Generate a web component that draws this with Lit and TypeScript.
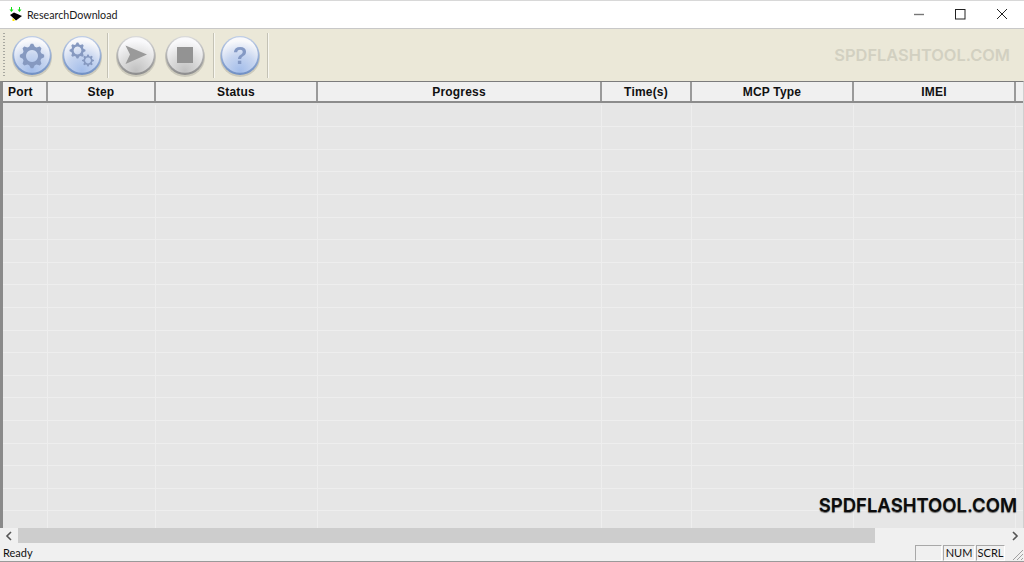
import { LitElement, html, css, svg } from "lit";
import { customElement } from "lit/decorators.js";

const cols = [
  ["Port", 45], ["Step", 108], ["Status", 162], ["Progress", 284],
  ["Time(s)", 90], ["MCP Type", 162], ["IMEI", 162],
] as const;

function gearPath(cx: number, cy: number, r: number, R: number, teeth: number) {
  let d = "";
  const n = teeth * 4;
  for (let i = 0; i < n; i++) {
    const a = (i / n) * Math.PI * 2 - Math.PI / n;
    const rad = i % 4 < 2 ? R : r;
    d += `${i ? "L" : "M"}${(cx + rad * Math.cos(a)).toFixed(2)} ${(cy + rad * Math.sin(a)).toFixed(2)}`;
  }
  return d + "Z";
}

function orb(id: string, blue: boolean, inner: unknown) {
  const edge = blue ? "#6f8fc4" : "#8c8c8c";
  const mid = blue ? "#c8d6f0" : "#dedede";
  const low = blue ? "#a3bdea" : "#c0c0c0";
  return html`<svg class="orb" width="42" height="44" viewBox="0 0 42 44">
    <defs>
      <linearGradient id="${id}b" x1="0" y1="0" x2="0" y2="1">
        <stop offset="0" stop-color="${blue ? "#c0cee6" : "#dadada"}" />
        <stop offset="1" stop-color="${edge}" />
      </linearGradient>
      <radialGradient id="${id}f" cx=".5" cy=".95" r=".85">
        <stop offset="0" stop-color="${low}" />
        <stop offset=".55" stop-color="${mid}" />
        <stop offset="1" stop-color="#f9f9fb" />
      </radialGradient>
    </defs>
    <ellipse cx="21" cy="23.5" rx="20" ry="19.5" fill="#000" opacity=".13" />
    <circle cx="21" cy="21.5" r="19.5" fill="url(#${id}b)" />
    <circle cx="21" cy="21" r="17.8" fill="url(#${id}f)" />
    ${inner}
  </svg>`;
}

const gearA = svg`<path fill-rule="evenodd" fill="#8699c0" d="${gearPath(21, 22, 9.6, 12.2, 8)} M21 16a6 6 0 1 0 .01 0Z" />`;
const gearB = svg`
  <path fill-rule="evenodd" fill="#8699c0" d="${gearPath(16.5, 16.5, 6.2, 8, 8)} M16.5 12.6a3.9 3.9 0 1 0 .01 0Z" />
  <path fill-rule="evenodd" fill="#8699c0" d="${gearPath(27, 26.5, 4.4, 6, 8)} M27 23.6a2.9 2.9 0 1 0 .01 0Z" />`;
const play = svg`<path fill="#9a9a9a" d="M10.5 11.5 32 20.5 10.5 30 15 20.5Z" />`;
const stop = svg`<rect x="13" y="13" width="16" height="16" fill="#939393" />`;
const help = svg`<text x="21" y="30" text-anchor="middle" font-family="Liberation Sans, sans-serif" font-weight="700" font-size="24" fill="#8499c4">?</text>`;

const logo = html`<svg width="14" height="14" viewBox="0 0 14 14">
  <path fill="#16e016" d="M2 0h1v2.5h1.5L2.5 5 .5 2.5H2ZM10 0h1v2.5h1.5L10.5 5l-2-2.5H10Z" />
  <path fill="#000" d="M1 8 5 5.5 13 9 7 13.5Z" />
  <path fill="#ffe600" d="M3.5 11 6 13l-1 1H3.5Z" />
</svg>`;

@customElement("app-root")
export class AppRoot extends LitElement {
  static styles = css`
    :host {
      display: flex;
      flex-direction: column;
      width: 1024px;
      height: 562px;
      overflow: hidden;
      position: relative;
      background: #f0f0f0;
      font-family: "Liberation Sans", Arial, sans-serif;
      color: #000;
    }
    .title {
      height: 29px;
      flex: none;
      display: flex;
      align-items: center;
      background: #fff;
      box-sizing: border-box;
      border-top: 1px solid #d8d8d8;
      border-bottom: 1px solid #c8c8c8;
      padding: 0 0 1px 9px;
    }
    .name {
      margin-left: 4px;
      font: 10.7px Lato, sans-serif;
      color: #1a1a1a;
    }
    .winbtns { margin-left: auto; display: flex; margin-right: 2px; }
    .winbtn {
      width: 41px;
      height: 27px;
      display: flex;
      align-items: center;
      justify-content: center;
    }
    .toolbar {
      height: 52px;
      flex: none;
      box-sizing: border-box;
      background: #ebe8d8;
      display: flex;
      align-items: center;
      padding-left: 3px;
    }
    .grip {
      width: 2px;
      height: 44px;
      margin-right: 6px;
      background: repeating-linear-gradient(to bottom, #a8a8a0 0 1px, transparent 1px 3px);
    }
    .orb { flex: none; display: block; margin: 1px 4px 0 0; filter: blur(0.45px); }
    .sep {
      width: 1px;
      height: 45px;
      flex: none;
      background: #c4c2b5;
      border-right: 1px solid #f8f7f0;
    }
    .gap2 { width: 2px; flex: none; }
    .gap3 { width: 3px; flex: none; }
    .gap4 { width: 4px; flex: none; }
    .gap6 { width: 6px; flex: none; }
    .wm1 {
      margin-left: auto;
      margin-right: 14px;
      font: 600 16.4px Inter, sans-serif;
      color: #d2d0c1;
    }
    .grid {
      flex: 1;
      min-height: 0;
      display: flex;
      flex-direction: column;
      box-sizing: border-box;
      border-top: 1px solid #7c7c7c;
      border-left: 3px solid #8a8a8a;
      border-right: 1px solid #d0d0d0;
      background: #e6e6e6;
    }
    .head {
      flex: none;
      display: flex;
      height: 21px;
      box-sizing: border-box;
      border-bottom: 2px solid #8c8c8c;
      background: #f0f0f0;
    }
    .th {
      flex: none;
      box-sizing: border-box;
      border-right: 2px solid #9a9a9a;
      text-align: center;
      font: 700 12px/20px "Liberation Sans", Arial, sans-serif;
      letter-spacing: 0.2px;
      color: #111;
    }
    .th.left { text-align: left; padding-left: 5px; }
    .rest { flex: 1; }
    .body { flex: 1; min-height: 0; overflow: hidden; padding-top: 1.6px; }
    .row { display: flex; height: 22.6px; box-sizing: border-box; border-bottom: 1px solid #eeeeee; }
    .td { flex: none; box-sizing: border-box; border-right: 1px solid #eeeeee; }
    .scroll {
      flex: none;
      height: 17px;
      display: flex;
      align-items: stretch;
      background: #f0f0f0;
      padding-bottom: 2px;
      box-sizing: border-box;
    }
    .arrow { flex: none; width: 18px; display: flex; align-items: center; justify-content: center; }
    .track { flex: 1; display: flex; }
    .thumb { width: 857px; background: #cdcdcd; }
    .status {
      flex: none;
      height: 17px;
      display: flex;
      align-items: stretch;
      box-sizing: border-box;
      border-bottom: 1px solid #9a9a9a;
      background: #f0f0f0;
      padding-left: 3px;
      font: 11px/15px Lato, sans-serif;
      color: #111;
    }
    .ready { flex: 1; }
    .pane {
      flex: none;
      box-sizing: border-box;
      margin-right: 1px;
      border: 1px solid;
      border-color: #a8a8a8 #fff #fff #a8a8a8;
      text-align: center;
      line-height: 14px;
    }
    .gripper { width: 18px; flex: none; display: flex; align-items: flex-end; justify-content: flex-end; }
    .wm2 {
      position: absolute;
      right: 7px;
      bottom: 46px;
      font: 600 18.5px/22px Inter, sans-serif;
      color: #0c0c0c;
      text-shadow: 0 1px 1px #666;
    }
  `;

  render() {
    const widths = cols.map((c) => c[1]);
    return html`
      <div class="title">
        ${logo}
        <span class="name">ResearchDownload</span>
        <div class="winbtns">
          <div class="winbtn"><svg width="11" height="11"><path d="M0 5.5h10" stroke="#777" stroke-width="1.4" /></svg></div>
          <div class="winbtn"><svg width="11" height="11"><rect x=".5" y=".5" width="9.5" height="9.5" fill="none" stroke="#222" /></svg></div>
          <div class="winbtn"><svg width="12" height="12"><path d="M1 1l10 10M11 1 1 11" stroke="#222" fill="none" /></svg></div>
        </div>
      </div>
      <div class="toolbar">
        <div class="grip"></div>
        ${orb("a", true, gearA)}
        <span class="gap4"></span>
        ${orb("b", true, gearB)}
        <div class="sep"></div>
        <span class="gap6"></span>
        ${orb("c", false, play)}
        <span class="gap3"></span>
        ${orb("d", false, stop)}
        <span class="gap3"></span>
        <div class="sep"></div>
        <span class="gap4"></span>
        ${orb("e", true, help)}
        <span class="gap2"></span>
        <div class="sep"></div>
        <div class="wm1">SPDFLASHTOOL.COM</div>
      </div>
      <div class="grid">
        <div class="head">
          ${cols.map(
            ([n, w], i) => html`<div class="th ${i === 0 ? "left" : ""}" style="width:${w}px">${n}</div>`
          )}
          <div class="rest"></div>
        </div>
        <div class="body">
          ${Array.from({ length: 19 }).map(
            () => html`<div class="row">${widths.map((w) => html`<div class="td" style="width:${w}px"></div>`)}</div>`
          )}
        </div>
      </div>
      <div class="scroll">
        <div class="arrow"><svg width="8" height="10"><path d="M6 1 2 5l4 4" fill="none" stroke="#555" stroke-width="1.6" /></svg></div>
        <div class="track"><div class="thumb"></div></div>
        <div class="arrow"><svg width="8" height="10"><path d="M2 1l4 4-4 4" fill="none" stroke="#555" stroke-width="1.6" /></svg></div>
      </div>
      <div class="status">
        <div class="ready">Ready</div>
        <div class="pane" style="width:27px"></div>
        <div class="pane" style="width:32px">NUM</div>
        <div class="pane" style="width:29px">SCRL</div>
        <div class="gripper"><svg width="14" height="14"><path d="M13 3 3 13M13 7 7 13M13 11l-2 2" stroke="#a0a0a0" fill="none" /></svg></div>
      </div>
      <div class="wm2">SPDFLASHTOOL.COM</div>
    `;
  }
}
